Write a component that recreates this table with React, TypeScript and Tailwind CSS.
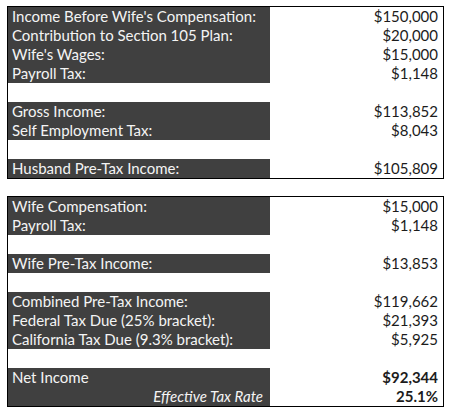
import React from "react";

type Row = {
  label: string;
  value: string;
  italic?: boolean;
  bold?: boolean;
} | null;

const firstTable: Row[] = [
  { label: "Income Before Wife's Compensation:", value: "$150,000" },
  { label: "Contribution to Section 105 Plan:", value: "$20,000" },
  { label: "Wife's Wages:", value: "$15,000" },
  { label: "Payroll Tax:", value: "$1,148" },
  null,
  { label: "Gross Income:", value: "$113,852" },
  { label: "Self Employment Tax:", value: "$8,043" },
  null,
  { label: "Husband Pre-Tax Income:", value: "$105,809" },
];

const secondTable: Row[] = [
  { label: "Wife Compensation:", value: "$15,000" },
  { label: "Payroll Tax:", value: "$1,148" },
  null,
  { label: "Wife Pre-Tax Income:", value: "$13,853" },
  null,
  { label: "Combined Pre-Tax Income:", value: "$119,662" },
  { label: "Federal Tax Due (25% bracket):", value: "$21,393" },
  { label: "California Tax Due (9.3% bracket):", value: "$5,925" },
  null,
  { label: "Net Income", value: "$92,344", bold: true },
  { label: "Effective Tax Rate", value: "25.1%", italic: true, bold: true },
];

function Sheet({ rows }: { rows: Row[] }) {
  return (
    <div className="w-[437px] border border-black bg-white">
      {rows.map((row, i) =>
        row ? (
          <div key={i} className="flex h-[19px] leading-[19px]">
            <div
              className={
                "w-[262px] shrink-0 bg-[#404040] text-[#f4f4f4] whitespace-nowrap overflow-hidden " +
                (row.italic ? "text-right pr-[7px] italic" : "pl-[4px]")
              }
            >
              {row.label}
            </div>
            <div
              className={
                "flex-1 text-right pr-[5px] text-[#1c1c1c] " +
                (row.bold ? "font-bold" : "")
              }
            >
              {row.value}
            </div>
          </div>
        ) : (
          <div key={i} className="h-[19px]" />
        )
      )}
    </div>
  );
}

export default function App() {
  return (
    <div
      className="w-[450px] h-[411px] bg-white pl-[7px] pt-[6px] text-[15px]"
      style={{ fontFamily: "Lato, 'Liberation Sans', sans-serif" }}
    >
      <Sheet rows={firstTable} />
      <div className="h-[17px]" />
      <Sheet rows={secondTable} />
    </div>
  );
}
